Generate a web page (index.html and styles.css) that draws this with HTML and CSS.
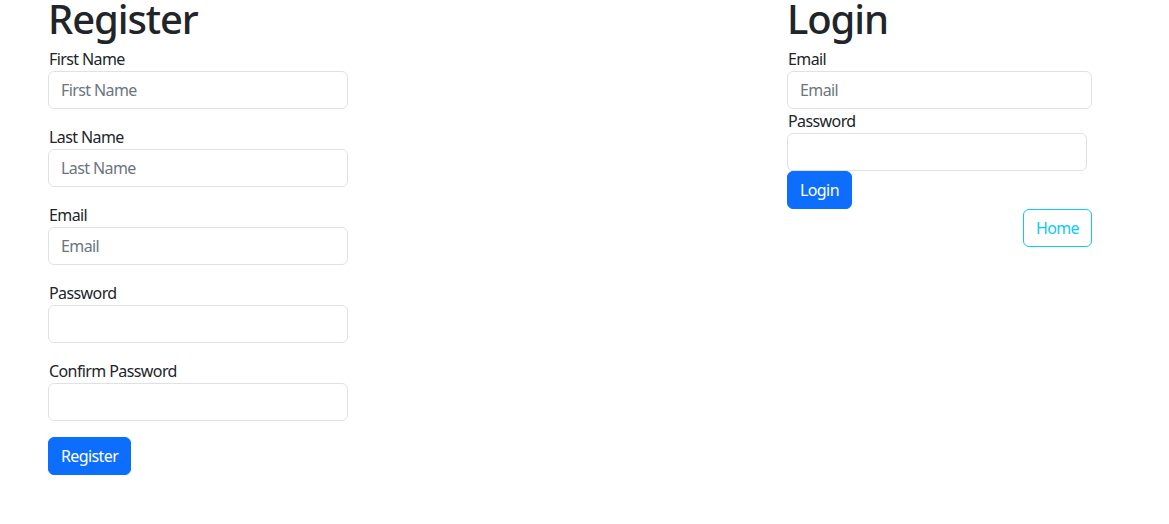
FILE: index.html
```html
<!DOCTYPE html>
<html lang="en">
<head>
<meta charset="utf-8">
<title>Register / Login</title>
<link rel="stylesheet" href="styles.css">
</head>
<body>
<div class="page">
  <div class="col col-register">
    <h1 class="title">Register</h1>
    <form class="form">
      <div class="field spaced">
        <label class="label">First Name</label>
        <input class="input input-reg" type="text" placeholder="First Name">
      </div>
      <div class="field spaced">
        <label class="label">Last Name</label>
        <input class="input input-reg" type="text" placeholder="Last Name">
      </div>
      <div class="field spaced">
        <label class="label">Email</label>
        <input class="input input-reg" type="email" placeholder="Email">
      </div>
      <div class="field spaced">
        <label class="label">Password</label>
        <input class="input input-reg" type="password">
      </div>
      <div class="field spaced">
        <label class="label">Confirm Password</label>
        <input class="input input-reg" type="password">
      </div>
      <div class="actions">
        <button class="btn btn-primary" type="button">Register</button>
      </div>
    </form>
  </div>
  <div class="col col-login">
    <h1 class="title">Login</h1>
    <form class="form">
      <div class="field">
        <label class="label">Email</label>
        <input class="input input-login-email" type="email" placeholder="Email">
      </div>
      <div class="field">
        <label class="label">Password</label>
        <input class="input input-login-pass" type="password">
      </div>
      <div class="actions">
        <button class="btn btn-primary" type="button">Login</button>
      </div>
      <div class="home-row">
        <a class="btn btn-outline-info" href="#">Home</a>
      </div>
    </form>
  </div>
</div>
</body>
</html>
```
FILE: styles.css
```css
* { box-sizing: border-box; }
html, body { margin: 0; padding: 0; background: #fff; }
body {
  font-family: "Noto Sans", "Open Sans", sans-serif;
  font-size: 16px;
  line-height: 24px;
  letter-spacing: -0.6px;
  color: #212529;
}
.page {
  display: flex;
  padding-left: 48px;
}
.col-register { width: 739px; }
.col-login { width: 305px; }
.title {
  font-size: 40px;
  font-weight: 500;
  line-height: 38px;
  margin: 0 0 9px 0;
  letter-spacing: -1.1px;
}
.form { display: flex; flex-direction: column; }
.field { display: flex; flex-direction: column; }
.spaced { margin-bottom: 16px; }
.label { display: block; padding-left: 1px; }
.input {
  display: block;
  height: 38px;
  padding: 6px 12px;
  font: inherit;
  letter-spacing: inherit;
  color: #212529;
  background: #fff;
  border: 1px solid #dee2e6;
  border-radius: 6px;
  outline: none;
}
.input::placeholder { color: #6c757d; opacity: 1; }
.input-reg { width: 300px; }
.input-login-email { width: 305px; }
.input-login-pass { width: 300px; }
.actions { display: flex; }
.btn {
  display: inline-block;
  height: 38px;
  padding: 6px 12px;
  font: inherit;
  letter-spacing: inherit;
  line-height: 24px;
  border-radius: 6px;
  border: 1px solid transparent;
  text-decoration: none;
  cursor: pointer;
}
.btn-primary { background: #0d6efd; border-color: #0d6efd; color: #fff; }
.btn-outline-info { background: #fff; border-color: #0dcaf0; color: #0dcaf0; }
.home-row { display: flex; justify-content: flex-end; }
```
